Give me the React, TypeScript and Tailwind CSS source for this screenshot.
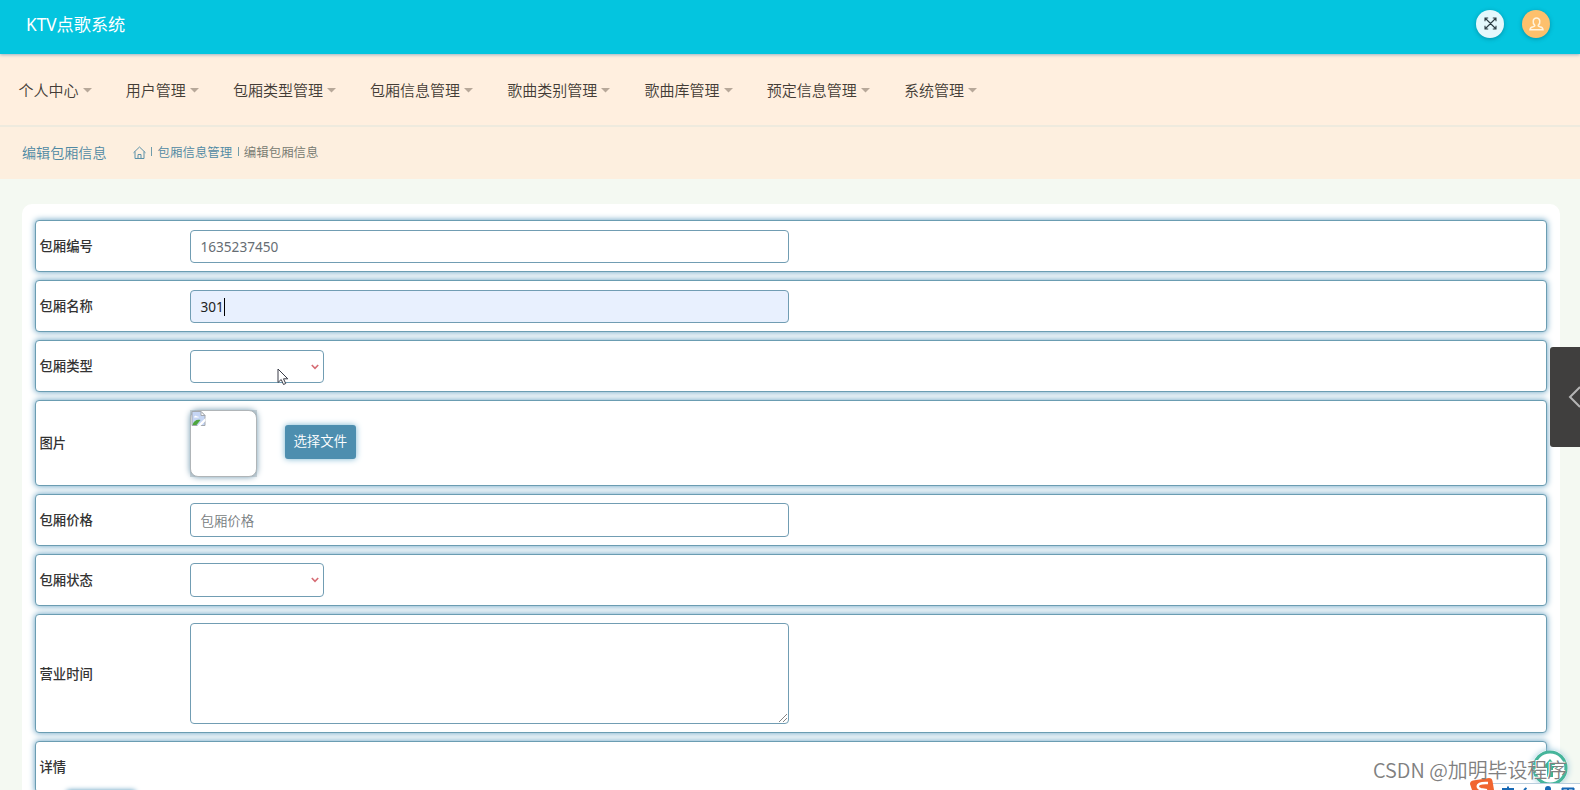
import type { ReactNode } from "react";

const menus = ["个人中心", "用户管理", "包厢类型管理", "包厢信息管理", "歌曲类别管理", "歌曲库管理", "预定信息管理", "系统管理"];

function Row({ label, height, children }: { label: string; height: string; children?: ReactNode }) {
  return (
    <div className={`flex shrink-0 items-center rounded-[4px] border border-[#6b9db2] bg-white pl-1 shadow-[0_0_6px_#5b9abd] ${height}`}>
      <div className="-ml-[0.5px] w-[150.5px] shrink-0 text-[13.33px] leading-5 font-medium text-[#333]">{label}</div>
      {children}
    </div>
  );
}

function Field({ className, children }: { className?: string; children?: ReactNode }) {
  return (
    <div className={`flex w-[599px] items-center rounded-[4px] border border-[#719db3] pt-px pl-[9.5px] text-[13.6px] ${className ?? ""}`}>
      {children}
    </div>
  );
}

function SelectBox({ className }: { className: string }) {
  return (
    <div className={`flex w-[133.5px] items-center justify-end rounded-[4px] border border-[#719db3] pr-[3.5px] ${className}`}>
      <svg width="8" height="6" viewBox="0 0 8 6" fill="none" stroke="#d66c74" strokeWidth="1.6">
        <path d="M.8 1 4 4.4 7.2 1" />
      </svg>
    </div>
  );
}

function BrokenImage() {
  return (
    <svg width="15" height="15" viewBox="0 0 14 15">
      <path d="M.5.5h9l4 4v10H.5z" fill="#c5d5f4" stroke="#a3a8ae" />
      <path d="M9.5.5v4h4z" fill="#fff" stroke="#a3a8ae" />
      <path d="M2.5 6.5c0-2 2.6-2.4 3-1 1.5-.4 2 .5 1.7 1z" fill="#fff" />
      <path d="M1 14c1-4 4-6 8-5l-4 5z" fill="#4fa63d" />
      <path d="M5.5 15 14 7v3l-5 5z" fill="#fff" />
    </svg>
  );
}

export default function App() {
  return (
    <div className="relative flex h-[790px] w-[1580px] flex-col overflow-hidden bg-[#f4f9f2] font-['Noto_Sans','Noto_Sans_CJK_SC',sans-serif]">
      <header className="relative z-10 flex h-[54px] shrink-0 items-center justify-between bg-[#04c5df] pr-[30px] pb-[7px] pl-[26px] shadow-[0_1px_3px_rgba(80,130,170,0.55)]">
        <div className="pt-[3px] text-[17.2px] text-white">KTV点歌系统</div>
        <div className="flex gap-[18px]">
          <div className="flex size-7 items-center justify-center rounded-full bg-[#e4f8fc] shadow-[0_1px_4px_rgba(0,70,90,0.4)]">
            <svg width="13" height="13" viewBox="0 0 13 13" fill="none" stroke="#2c3c43" strokeWidth="1.1">
              <path d="M1 1l11 11M12 1 1 12M1 4.200V1h3.200M8.800 1H12v3.200M12 8.800V12H8.800M4.200 12H1V8.800" />
            </svg>
          </div>
          <div className="flex size-7 items-center justify-center rounded-full bg-[#fdc06c] shadow-[0_1px_4px_rgba(0,70,90,0.4)]">
            <svg width="15" height="14" viewBox="0 0 15 14" fill="none" stroke="#fff4e0" strokeWidth="1.5">
              <path d="M5.700 8.200C3.400 6.400 3.500 1 7.500 1s4.100 5.400 1.800 7.200c-.4.9.3 1.200 1.700 1.600 2 .5 2.900 1.400 3 3H1c.1-1.600 1-2.500 3-3 1.400-.4 2.100-.7 1.700-1.600z" />
            </svg>
          </div>
        </div>
      </header>

      <nav className="flex h-[73px] shrink-0 items-center gap-[34.2px] border-b-2 border-[#eeeade] bg-[#ffefdf] pl-[18.5px]">
        {menus.map((menu) => (
          <div key={menu} className="flex items-center gap-1 text-[15px] font-[350] text-[#433c36]">
            <span className="pt-px">{menu}</span>
            <svg className="mt-px" width="9" height="5" viewBox="0 0 9 5">
              <path d="M0 0h9L4.500 4.500z" fill="#b7a899" />
            </svg>
          </div>
        ))}
      </nav>

      <div className="flex h-[52px] shrink-0 items-center bg-[#fdefdf] pl-[22px] text-[#4f89a3]">
        <div className="w-[111px] text-[14.1px] font-[350]">编辑包厢信息</div>
        <div className="flex items-center gap-[5.3px] text-[12.45px] font-[350]">
          <svg width="13" height="13" viewBox="0 0 13 13" fill="none" stroke="#5a90a8" strokeWidth="1">
            <path d="M.5 6.800 6.500 1l6 5.800M2 5.500v7h9v-7M5 12.500v-4h3v4" />
          </svg>
          <span className="mb-0.5 h-[9px] w-px bg-[#6f9cab]" />
          <span>包厢信息管理</span>
          <span className="mb-0.5 h-[9px] w-px bg-[#6f9cab]" />
          <span className="text-[#74786f]">编辑包厢信息</span>
        </div>
      </div>

      <main className="mt-[25px] ml-[22px] flex h-[620px] w-[1538px] shrink-0 flex-col gap-2 rounded-[10px] bg-white pt-4 pr-[13px] pl-[13px]">
        <Row label="包厢编号" height="h-[52px]">
          <Field className="mt-px h-[33px] text-[#666d73]">1635237450</Field>
        </Row>
        <Row label="包厢名称" height="h-[52px]">
          <Field className="mt-px h-[33px] bg-[#e8f0fe] text-[#222]">
            301<span className="h-[18px] w-px bg-black" />
          </Field>
        </Row>
        <Row label="包厢类型" height="h-[52px]">
          <SelectBox className="mt-px h-[33px]" />
        </Row>
        <Row label="图片" height="h-[86px]">
          <div className="size-[67px] bg-[#d5d9db]">
            <div className="size-[67px] rounded-[8px] border border-[#b0b5b8] bg-white shadow-[0_0_6px_#6e96ad]">
              <BrokenImage />
            </div>
          </div>
          <div className="mb-[3px] ml-[27.5px] flex h-[34px] w-[71.5px] items-center justify-center rounded-[3px] bg-[#4d8eaf] text-[13.4px] font-[350] text-white shadow-[0_0_6px_#78b4d0]">
            选择文件
          </div>
        </Row>
        <Row label="包厢价格" height="h-[52px]">
          <Field className="h-[34px] font-[350] text-[#777c80]">
            <span className="pt-px text-[13.4px]">包厢价格</span>
          </Field>
        </Row>
        <Row label="包厢状态" height="h-[52px]">
          <SelectBox className="h-[34px]" />
        </Row>
        <Row label="营业时间" height="h-[119px]">
          <div className="flex h-[101px] w-[599px] items-end justify-end rounded-[4px] border border-[#719db3] pr-px pb-px">
            <svg width="8" height="8" viewBox="0 0 8 8" fill="none" stroke="#777" strokeWidth=".9">
              <path d="M0 8 8 0M4 8l4-4" />
            </svg>
          </div>
        </Row>
        <Row label="详情" height="h-[52px]" />
      </main>

      <svg className="absolute top-[368px] left-[277px]" width="12" height="18" viewBox="0 0 12 18">
        <path d="M1 1v13.500l3.200-3 2.300 5 2.200-1-2.200-4.700h4.300z" fill="#fff" stroke="#3a3d48" strokeWidth="1" />
      </svg>

      <div className="absolute top-[790px] left-[66px] h-[20px] w-[70px] rounded-[4px] shadow-[0_0_5px_#5b9abd]" />

      <div className="absolute top-[347px] left-[1550px] flex h-[100px] w-[30px] items-center justify-end rounded-l-[3px] bg-[#403f3e]">
        <svg width="12" height="22" viewBox="0 0 12 22" fill="none" stroke="#b5b5b5" strokeWidth="2">
          <path d="M12 1 2 11l10 10" />
        </svg>
      </div>

      <div className="absolute top-[750px] left-[1532px] size-9 rounded-full shadow-[0_0_6px_#9cc9dd]">
        <svg width="36" height="36" viewBox="0 0 36 36">
          <circle cx="18" cy="18" r="16" fill="#fff" stroke="#46b59b" strokeWidth="3.200" />
          <path d="M18 9l8 9h-5v9h-6v-9h-5z" fill="#3eb494" />
        </svg>
      </div>

      <div className="absolute top-[783px] left-[1482px] h-[10px] w-[110px] rounded-l-[3px] border border-[#b9cede] bg-white" />
      <svg className="absolute top-[778px] left-[1470px]" width="110" height="12" viewBox="0 0 110 12">
        <path d="M0 6Q0 3 3 2.500L19 0q3 0 3.500 3l1.500 9H2z" fill="#f1652f" />
        <path d="M18 5C10 4.500 7 6.500 8 9.200q.5 1.500 3 2l6 1" fill="none" stroke="#fff" strokeWidth="2.500" />
        <path d="M32 11h12M38 8.500V12M54 12l2.500-2M92 10.500h12M92.500 10v2M98 10v2M103.500 10v2" fill="none" stroke="#1769b5" strokeWidth="2" />
        <circle cx="78" cy="11" r="3" fill="#1769b5" />
      </svg>
      <div className="absolute top-[756px] left-[1373px] font-['Noto_Sans_CJK_SC',sans-serif] text-[19.9px] leading-[28px] font-[350] whitespace-nowrap text-[#808080] [text-shadow:-1px_-1px_0_#fff]">
        CSDN @加明毕设程序
      </div>
    </div>
  );
}
